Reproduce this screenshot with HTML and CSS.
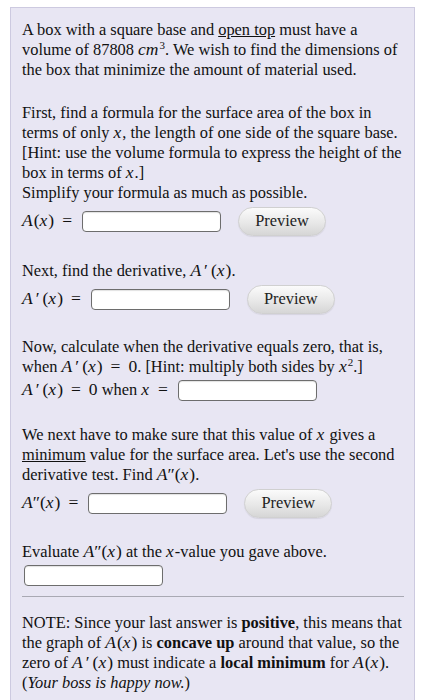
FILE: index.html
```html
<!DOCTYPE html>
<html>
<head>
<meta charset="utf-8">
<link rel="stylesheet" href="styles.css">
</head>
<body>
<div class="problem">
  <div class="section intro">
    A box with a square base and <u>open top</u> must have a volume of 87808 <span class="m"><i>cm</i><sup>3</sup></span>. We wish to find the dimensions of the box that minimize the amount of material used.
  </div>

  <div class="section first-q">
    <div>First, find a formula for the surface area of the box in terms of only <i class="m">x</i>, the length of one side of the square base. [Hint: use the volume formula to express the height of the box in terms of <i class="m">x</i>.]</div>
    <div>Simplify your formula as much as possible.</div>
    <div class="row tall">
      <span class="label"><span class="m"><i>A</i>(<i>x</i>)<span class="eq">=</span></span></span>
      <span class="field"></span>
      <button class="preview">Preview</button>
    </div>
  </div>

  <div class="section">
    <div>Next, find the derivative, <span class="m"><i>A</i><span class="pr">′</span>(<i>x</i>)</span>.</div>
    <div class="row tall">
      <span class="label"><span class="m"><i>A</i><span class="pr">′</span>(<i>x</i>)<span class="eq">=</span></span></span>
      <span class="field"></span>
      <button class="preview">Preview</button>
    </div>
  </div>

  <div class="section">
    <div>Now, calculate when the derivative equals zero, that is, when <span class="m"><i>A</i><span class="pr">′</span>(<i>x</i>)<span class="eq">=</span>0</span>. [Hint: multiply both sides by <span class="m"><i>x</i><sup>2</sup></span>.]</div>
    <div class="row plain">
      <span class="label"><span class="m"><i>A</i><span class="pr">′</span>(<i>x</i>)<span class="eq">=</span>0</span> when <span class="m"><i>x</i><span class="eq">=</span></span></span>
      <span class="field"></span>
    </div>
  </div>

  <div class="section second">
    <div>We next have to make sure that this value of <i class="m">x</i> gives a <u>minimum</u> value for the surface area. Let's use the second derivative test. Find <span class="m"><i>A</i><span class="dpr">″</span>(<i>x</i>)</span>.</div>
    <div class="row tall">
      <span class="label"><span class="m"><i>A</i><span class="dpr">″</span>(<i>x</i>)<span class="eq">=</span></span></span>
      <span class="field"></span>
      <button class="preview">Preview</button>
    </div>
  </div>

  <div class="section last">
    <div>Evaluate <span class="m"><i>A</i><span class="dpr">″</span>(<i>x</i>)</span> at the <i class="m">x</i>-value you gave above.</div>
    <div class="row single">
      <span class="field first"></span>
    </div>
  </div>

  <hr class="rule">

  <div class="note">
    NOTE: Since your last answer is <b>positive</b>, this means that the graph of <span class="m"><i>A</i>(<i>x</i>)</span> is <b>concave up</b> around that value, so the zero of <span class="m"><i>A</i><span class="pr">′</span>(<i>x</i>)</span> must indicate a <b>local minimum</b> for <span class="m"><i>A</i>(<i>x</i>)</span>. (<i>Your boss is happy now.</i>)
  </div>
</div>
</body>
</html>
```

FILE: styles.css
```css
html, body {
  margin: 0;
  padding: 0;
  background: #ffffff;
}

body {
  padding: 7px 7px 0 10px;
}

.problem {
  background: #e8e6f3;
  border: 1px solid #cdcae0;
  border-bottom: none;
  padding: 12px 10px 40px 11px;
  font-family: "Liberation Serif", "Times New Roman", serif;
  font-size: 16.4px;
  line-height: 20px;
  color: #111;
  min-height: 700px;
}

.section {
  margin-bottom: 22px;
}

.section.intro {
  margin-bottom: 23px;
}

.section.first-q {
  margin-bottom: 24px;
}

.section.second {
  margin-bottom: 23px;
}

.section.last {
  margin-bottom: 9px;
}

.m {
  font-family: "Liberation Serif", "Times New Roman", serif;
  font-size: 17.5px;
  line-height: 18px;
}

.m i, i.m {
  font-style: italic;
  margin-right: 1px;
}

.pr {
  margin: 0 3px 0 2px;
}

.dpr {
  margin: 0 0 0 -1px;
}

sup {
  font-size: 11px;
  line-height: 0;
  vertical-align: 0.55em;
}

.eq {
  margin: 0 8px 0 8px;
}

.label {
  white-space: nowrap;
}

.row {
  display: flex;
  align-items: center;
  white-space: nowrap;
}

.row.tall {
  height: 32px;
  margin-top: 2px;
}

.row.plain {
  height: 26px;
}

.row.single {
  height: 23px;
  margin-top: 2px;
}

.field {
  display: inline-block;
  width: 137px;
  height: 19px;
  background: #ffffff;
  border: 1px solid #6d6d6d;
  border-radius: 4px;
  box-shadow: inset 0 1px 1px rgba(0,0,0,0.12);
  margin-left: 2px;
}

.preview {
  margin-left: 17px;
  width: 88px;
  height: 29px;
  border: 1px solid #d0d0d0;
  border-radius: 15px;
  background: linear-gradient(#fbfbfb, #e6e6e6 60%, #d6d6d6);
  box-shadow: 0 1px 1px rgba(0,0,0,0.08);
  font-family: "Liberation Serif", "Times New Roman", serif;
  font-size: 16.4px;
  color: #222;
  padding: 0;
}

.rule {
  border: none;
  border-top: 1px solid #a9a9b3;
  margin: 0 0 16px 0;
}

.note {
  line-height: 20px;
}
```
